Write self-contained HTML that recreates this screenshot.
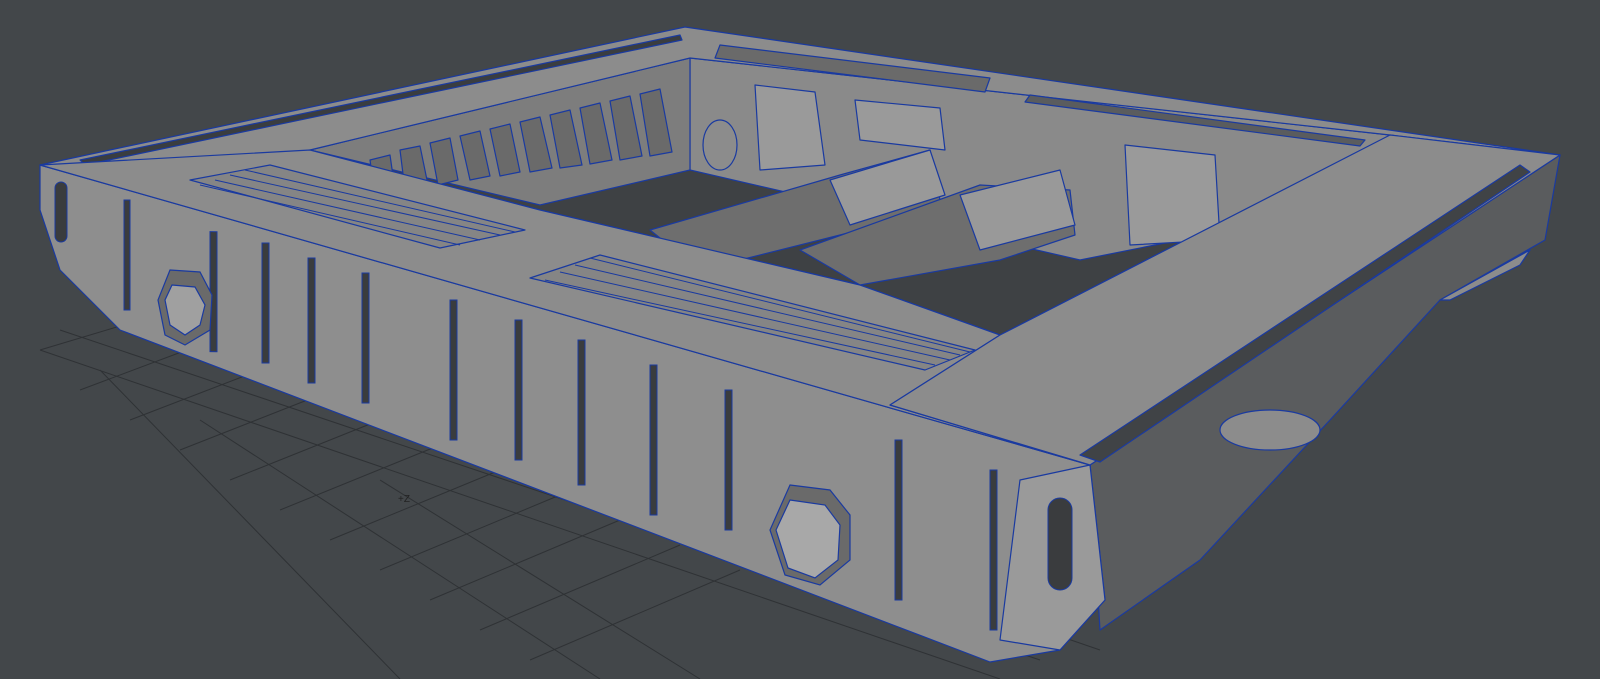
<!DOCTYPE html>
<html><head><meta charset="utf-8"><style>
html,body{margin:0;padding:0;background:#43474a;width:1600px;height:679px;overflow:hidden}
svg{display:block}
</style></head><body>
<svg width="1600" height="679" viewBox="0 0 1600 679" xmlns="http://www.w3.org/2000/svg">
<rect width="1600" height="679" fill="#43474a"/>
<!-- ground grid -->
<g stroke="#2f3235" stroke-width="1" fill="none">
<path d="M40 350 L1000 679 M60 330 L1040 660 M140 320 L1100 650 M380 480 L700 679 M200 420 L600 679 M100 370 L400 679"/>
<path d="M40 350 L140 320 M80 390 L200 345 M130 420 L260 370 M180 450 L320 395 M230 480 L380 420 M280 510 L440 445 M330 540 L500 470 M380 570 L560 495 M430 600 L620 520 M480 630 L680 545 M530 660 L740 570 M1150 560 L1280 450 M1200 520 L1300 430 M1250 470 L1330 400"/>
</g>
<text x="398" y="502" font-family="Liberation Sans,sans-serif" font-size="10" fill="#222">+Z</text>
<text x="1258" y="460" font-family="Liberation Sans,sans-serif" font-size="10" fill="#222">+X</text>
<g stroke="#1a3aa0" stroke-width="1.2" stroke-linejoin="round">
<!-- right side face -->
<polygon points="1090,465 1560,155 1545,240 1440,300 1330,420 1200,560 1100,630" fill="#5a5c5e"/>
<polygon points="1440,300 1530,250 1520,265 1450,300" fill="#8c8c8c"/>
<ellipse cx="1270" cy="430" rx="50" ry="20" fill="#8c8c8c"/>
<!-- front face -->
<polygon points="40,165 1090,465 1105,600 1060,650 990,662 120,330 60,270 40,210" fill="#8e8e8e"/>
<polygon points="1090,465 1105,600 1060,650 1000,640 1020,480" fill="#9a9a9a"/>
<!-- cavity -->
<polygon points="310,150 690,58 1390,135 1000,335 860,285 540,210" fill="#3e4144"/>
<polygon points="690,58 1390,135 1370,150 1230,230 1080,260 690,170" fill="#8a8a8a"/>
<polygon points="310,150 690,58 690,170 540,205" fill="#7d7d7d"/>
<!-- fins back-left -->
<g fill="#6a6a6a">
<polygon points="370,160 390,155 395,190 375,195"/><polygon points="400,150 420,146 428,185 405,190"/>
<polygon points="430,143 450,138 458,180 438,185"/><polygon points="460,136 480,131 490,176 470,180"/>
<polygon points="490,129 510,124 520,172 500,176"/><polygon points="520,122 540,117 552,168 530,172"/>
<polygon points="550,115 570,110 582,165 560,168"/><polygon points="580,108 600,103 612,160 590,164"/>
<polygon points="610,101 630,96 642,156 620,160"/><polygon points="640,94 660,89 672,152 650,156"/>
</g>
<!-- cylinders -->
<polygon points="650,230 840,175 930,150 940,200 860,230 700,270" fill="#6e6e6e"/>
<polygon points="830,180 930,150 945,195 850,225" fill="#999"/>
<polygon points="800,250 980,185 1070,190 1075,235 1000,260 860,285" fill="#6e6e6e"/>
<polygon points="960,195 1060,170 1075,225 980,250" fill="#999"/>
<polygon points="755,85 815,92 825,165 760,170" fill="#9a9a9a"/>
<polygon points="1125,145 1215,155 1220,240 1130,245" fill="#9a9a9a"/>
<polygon points="855,100 940,108 945,150 860,140" fill="#9a9a9a"/>
<ellipse cx="720" cy="145" rx="17" ry="25" fill="#8c8c8c"/>
<!-- back rim -->
<polygon points="40,165 685,27 1560,155 1390,135 690,58 310,150 140,190" fill="#8c8c8c"/>
<polygon points="80,160 680,35 682,40 85,165" fill="#3a3d40"/>
<polygon points="1030,95 1365,140 1360,146 1025,102" fill="#5a5c5e"/>
<polygon points="720,45 990,78 985,92 715,58" fill="#6a6a6a"/>
<!-- front strip top -->
<polygon points="40,165 310,150 540,210 860,285 1000,335 890,405 1090,465" fill="#8c8c8c"/>
<!-- right strip top -->
<polygon points="1000,335 1390,135 1560,155 1090,465 890,405" fill="#8c8c8c"/>
<polygon points="1080,455 1520,165 1530,172 1100,462" fill="#404346"/>
<!-- slatted panels -->
<polygon points="190,180 270,165 525,230 440,248" fill="#858585"/>
<polygon points="530,278 600,255 975,350 925,370" fill="#858585"/>
</g>
<g stroke="#1a3aa0" stroke-width="1" fill="none">
<path d="M200,185 L460,245 M215,180 L480,240 M230,175 L500,235 M245,170 L515,232"/>
<path d="M545,280 L935,365 M560,272 L950,360 M575,265 L960,355 M590,258 L970,352"/>
</g>
<!-- front slots -->
<g fill="#3a3c3e" stroke="#1a3aa0" stroke-width="1">
<rect x="124" y="200" width="6" height="110"/>
<rect x="210" y="228" width="7" height="120" transform="skewY(1)"/>
<rect x="262" y="243" width="7" height="120"/>
<rect x="308" y="258" width="7" height="125"/>
<rect x="362" y="273" width="7" height="130"/>
<rect x="450" y="300" width="7" height="140"/>
<rect x="515" y="320" width="7" height="140"/>
<rect x="578" y="340" width="7" height="145"/>
<rect x="650" y="365" width="7" height="150"/>
<rect x="725" y="390" width="7" height="140"/>
<rect x="895" y="440" width="7" height="160"/>
<rect x="990" y="470" width="7" height="160"/>
<rect x="1048" y="498" width="24" height="92" rx="12"/>
<rect x="55" y="182" width="12" height="60" rx="6"/>
</g>
<!-- bolts -->
<g stroke="#1a3aa0" stroke-width="1.2">
<polygon points="170,270 200,272 212,295 210,330 185,345 165,335 158,300" fill="#6a6a6a"/>
<polygon points="172,285 195,287 205,305 200,325 185,335 170,325 165,300" fill="#a0a0a0"/>
<polygon points="790,485 830,490 850,515 850,560 820,585 785,575 770,530" fill="#6a6a6a"/>
<polygon points="790,500 825,505 840,525 838,560 815,578 788,568 776,530" fill="#a8a8a8"/>
</g>
</svg>
</body></html>
